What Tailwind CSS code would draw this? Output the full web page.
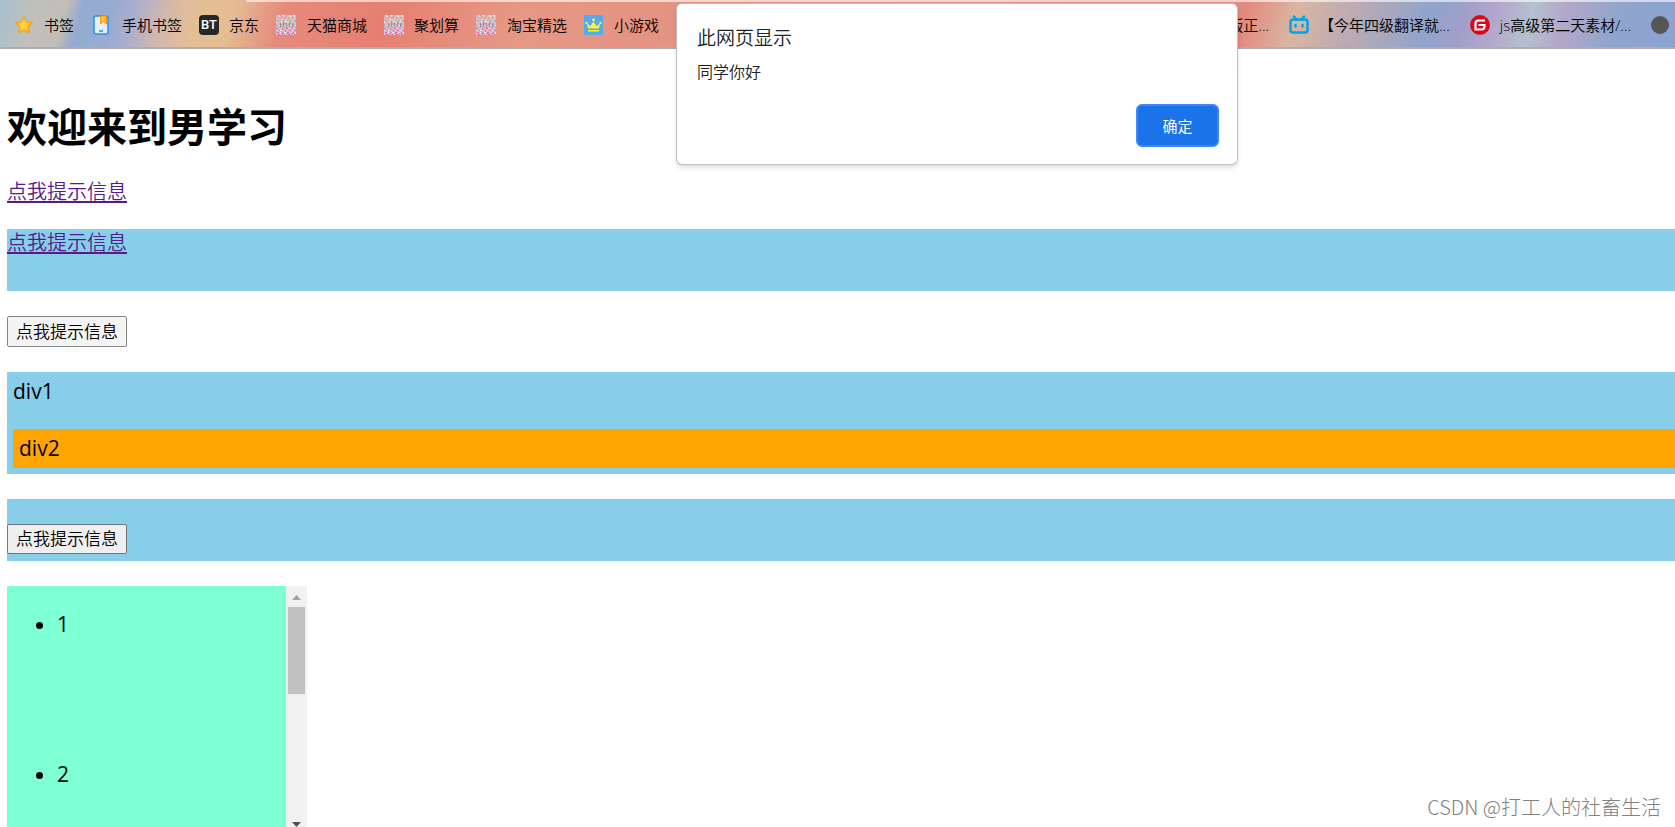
<!DOCTYPE html>
<html lang="zh-CN">
<head>
<meta charset="utf-8">
<title>欢迎来到男学习</title>
<script src="https://cdn.jsdelivr.net/npm/@tailwindcss/browser@4"></script>
</head>
<body class="h-screen overflow-hidden bg-white font-['Open_Sans','Noto_Sans_CJK_SC',sans-serif] text-xl text-black">
<svg class="hidden" aria-hidden="true">
  <defs>
    <symbol id="mosaic" viewBox="0 0 20 20">
      <rect width="20" height="20" fill="#d6bcc0"/>
      <g fill="none" stroke-width="1">
        <path stroke="#8fb4d6" stroke-dasharray="1 3 2 4 1 2" d="M0 .5H20M3 2.500H20M1 5.500H20M4 8.500H20M0 11.500H20M2 14.500H20M5 16.500H20"/>
        <path stroke="#e58f7c" stroke-dasharray="1 4 1 2 1 3" d="M1 1.500H20M4 3.500H20M2 6.500H20M0 9.500H20M3 12.500H20"/>
        <path stroke="#dce6cb" stroke-dasharray="2 3 1 5" d="M2 1.500H20M5 4.500H20M0 7.500H20M3 10.500H20M1 13.500H20M4 18.500H20"/>
        <path stroke="#e65fb0" stroke-dasharray="2 4 1 3" d="M0 13.500H20M3 15.500H20M1 17.500H20M5 18.500H20M2 19.500H20"/>
        <path stroke="#f0e9ee" stroke-dasharray="1 3 2 5" d="M2 0.500H20M5 6.500H20M0 15.500H20M4 17.500H20"/>
        <path stroke="#8d93ad" d="M4.500 8v4M7.500 7v5M10.500 8v3M13.500 7v5M16.500 8v4"/>
      </g>
    </symbol>
  </defs>
</svg>
<header class="relative h-[49px] overflow-hidden border-b-2 border-[#adadad] bg-[linear-gradient(105deg,#a5bfd0_0%,#bfc0bd_2%,#c3bdb8_4%,#93abd0_5%,#9aabd0_7%,#a9add0_8%,#d3b7ad_10%,#e4bf94_12%,#e5bd93_14%,#e58a7c_17%,#e58071_23%,#e69885_31%,#e38c80_50%,#e28a7d_74%,#d9b5a2_77%,#b7a9b6_81%,#8fa4cc_85%,#a09fc8_87%,#b3a8cd_89%,#b4c0cf_91%,#b3a7c8_93%,#91a5cc_96%,#89a3d1_100%)]">
  <div class="absolute top-0 right-0 left-[246px] h-0.5 rounded-bl bg-white/60"></div>
  <nav class="flex h-full items-center justify-between pt-[3px] pr-1.5 pl-3.5 text-[15px] font-[350] whitespace-nowrap">
    <div class="flex items-center gap-[17px]">
      <a href="#" class="flex items-center gap-2.5"><svg class="size-5" viewBox="0 0 20 20"><path fill="#ffd342" stroke="#f7a11d" stroke-width="1.500" stroke-linejoin="round" d="M10 2l2.500 5 5.700.900-4.100 4 1 5.700-5.100-2.700-5.100 2.700 1-5.700-4.100-4L7.500 7z"/></svg>书签</a>
      <a href="#" class="flex items-center gap-[11px]"><svg class="size-5" viewBox="0 0 20 20"><rect x="3" y="1" width="14" height="18" rx="2" fill="#e4efff" stroke="#2b8cf6" stroke-width="1.500"/><path fill="#ffbf2e" stroke="#f29a1b" d="M9.500 1h6v8l-3-2.500-3 2.500z"/><path stroke="#2b8cf6" stroke-width="1.500" d="M8 16h4"/></svg>手机书签</a>
      <a href="#" class="flex items-center gap-2.5"><span class="flex size-5 items-center justify-center rounded-sm bg-[#272727] font-[Roboto] text-[13px] font-medium text-white">BT</span>京东</a>
      <a href="#" class="flex items-center gap-[11px]"><svg class="size-5"><use href="#mosaic"/></svg>天猫商城</a>
      <a href="#" class="flex items-center gap-2.5"><svg class="size-5"><use href="#mosaic"/></svg>聚划算</a>
      <a href="#" class="flex items-center gap-[11px]"><svg class="size-5"><use href="#mosaic"/></svg>淘宝精选</a>
      <a href="#" class="flex items-center gap-2.5"><svg class="size-5" viewBox="0 0 20 20"><rect width="19" height="20" fill="#55a9ed"/><path fill="#fff035" d="M3 8.500l3.500 2.500 3-4.500 3 4.500 3.500-2.500-1 5h-11zM4 15h11v1.500H4z"/><circle cx="9.500" cy="5" r="1.400" fill="#fff035"/><circle cx="2.500" cy="8" r="1.200" fill="#fff035"/><circle cx="16.500" cy="8" r="1.200" fill="#fff035"/></svg>小游戏</a>
    </div>
    <div class="flex items-center gap-5">
      <a href="#">版正...</a>
      <a href="#" class="flex items-center gap-2.5"><svg class="size-5" viewBox="0 0 20 20" fill="none" stroke="#00a5e3" stroke-width="2.500" stroke-linecap="round"><rect x="1.500" y="4.500" width="17" height="13" rx="2.500"/><path d="M5 1.500l2.500 3M15 1.500l-2.500 3M6.500 10v1.500M13.500 10v1.500"/></svg>【今年四级翻译就...</a>
      <a href="#" class="flex items-center gap-2.5"><svg class="size-5" viewBox="0 0 20 20"><circle cx="10" cy="10" r="10" fill="#d80b1c"/><path fill="none" stroke="#fff" stroke-width="2.200" d="M15 5.500H8.500q-3 0-3 3v6h6q3 0 3-3V10H8.500"/></svg>js高级第二天素材/...</a>
      <a href="#" aria-label="更多" class="size-[18px] rounded-full bg-[#555]"></a>
    </div>
  </nav>
</header>
<main class="pl-[7px]">
  <h1 class="pt-12 text-[40px] leading-[60px] font-bold">欢迎来到男学习</h1>
  <p class="mt-5 leading-[30px] font-[350]"><a href="#" class="text-[#551a8b] underline decoration-2 underline-offset-2">点我提示信息</a></p>
  <div class="mt-[22px] h-[62px] bg-[skyblue] leading-7 font-[350]"><a href="#" class="text-[#551a8b] underline decoration-2 underline-offset-2">点我提示信息</a></div>
  <button class="mt-[25px] flex h-[31px] w-[120px] items-center justify-center rounded-xs border border-[#858585] bg-[#f4f4f4] text-[17px] font-[350]">点我提示信息</button>
  <div class="mt-[25px] bg-[skyblue] py-1.5 pl-1.5 text-[21px] leading-[27px]">div1
    <div class="mt-6 bg-[orange] p-1.5">div2</div>
  </div>
  <div class="mt-[25px] h-[62px] bg-[skyblue] pt-[25px]"><button class="flex h-[30px] w-[120px] items-center justify-center rounded-xs border border-[#767676] bg-[#efefef] text-[17px] font-[350]">点我提示信息</button></div>
  <div class="mt-[25px] flex h-[250px] w-[300px] bg-[aquamarine]">
    <ul class="flex-1 list-disc pt-[25px] pl-[50px] text-[21px] leading-[27px]"><li class="h-[150px]">1</li><li>2</li></ul>
    <div class="flex w-[21px] flex-col items-center bg-[#f1f1f1]" aria-hidden="true">
      <svg class="h-[21px] w-[21px] shrink-0" viewBox="0 0 21 21"><path fill="#a3a3a3" d="M6 14l4.500-5 4.500 5z"/></svg>
      <div class="h-[87px] w-[17px] bg-[#c1c1c1]"></div>
      <svg class="mt-auto h-[21px] w-[21px] shrink-0" viewBox="0 0 21 21"><path fill="#505050" d="M6 7l4.500 5 4.500-5z"/></svg>
    </div>
  </div>
</main>
<div role="dialog" aria-labelledby="dialog-title" class="absolute top-[3px] left-[676px] flex w-[562px] flex-col rounded-md border border-black/25 bg-white pt-[19px] pr-[18px] pb-[17px] pl-5 font-['Noto_Sans_CJK_SC',sans-serif] font-[350] text-[#202124] shadow-md">
  <h2 id="dialog-title" class="text-[19px] leading-7 font-[350]">此网页显示</h2>
  <p class="mt-2 text-base leading-6">同学你好</p>
  <button class="mt-[21px] h-[43px] w-[83px] self-end rounded-md border-2 border-[#4285f4] bg-[#1a73e8] text-[15px] font-normal text-white">确定</button>
</div>
<p class="absolute right-3.5 bottom-[5px] font-['Noto_Sans_CJK_SC',sans-serif] leading-[30px] font-light text-[#808080]">CSDN @打工人的社畜生活</p>
</body>
</html>
